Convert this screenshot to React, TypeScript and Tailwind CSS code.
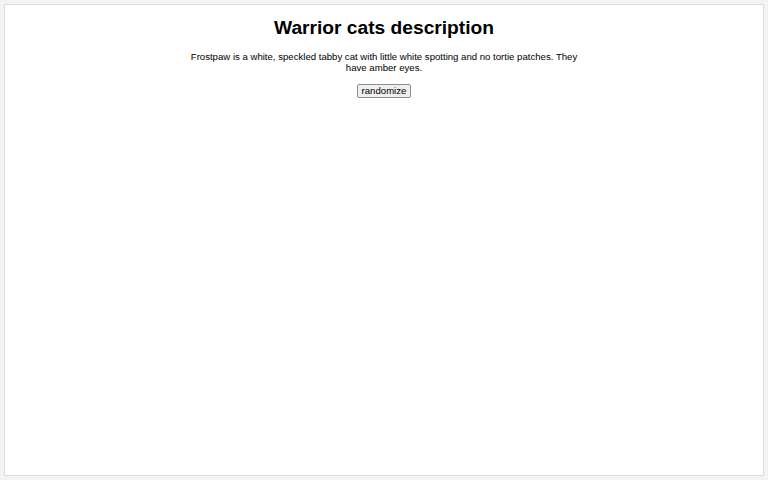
export default function App() {
  return (
    <div className="h-[480px] w-[768px] bg-[#f3f3f3] p-[4px] font-['Liberation_Sans',Arial,sans-serif] text-black">
      <div className="flex h-full flex-col items-center border border-[#dedede] bg-white">
        <h1 className="mt-[11px] text-[19.2px] font-bold leading-[24px]">Warrior cats description</h1>
        <p className="mt-[11px] w-[392px] text-center text-[9.6px] leading-[11px]">
          Frostpaw is a white, speckled tabby cat with little white spotting and no tortie patches. They
          have amber eyes.
        </p>
        <button className="mt-[11px] rounded-[2px] border border-[#8f8f8f] bg-[#efefef] px-[4px] text-[9.6px] leading-[12px]">
          randomize
        </button>
      </div>
    </div>
  );
}
